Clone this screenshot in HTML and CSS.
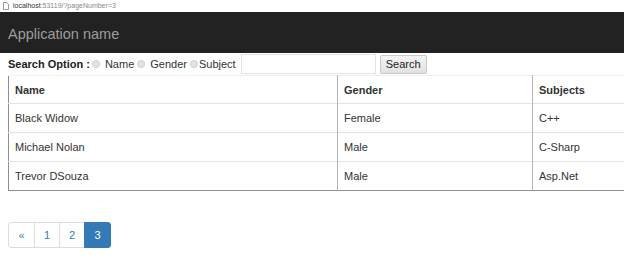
FILE: index.html
```html
<!DOCTYPE html>
<html>
<head>
<meta charset="utf-8">
<link rel="stylesheet" href="styles.css">
</head>
<body>
<div class="page">
  <div class="urlbar">
    <svg class="docicon" width="6" height="8" viewBox="0 0 6 8"><path d="M0.5 0.5H3.8L5.5 2.2V7.5H0.5Z" fill="#fff" stroke="#999" stroke-width="1"/></svg>
    <span class="host">localhost</span><span class="path">:53119/?pageNumber=3</span>
  </div>
  <div class="navbar"><span class="brand">Application name</span></div>
  <form class="search">
    <b class="label">Search Option :</b>
    <input type="radio" class="radio" name="opt"><span class="opt">Name</span>
    <input type="radio" class="radio" name="opt"><span class="opt">Gender</span>
    <input type="radio" class="radio tight" name="opt"><span class="opt">Subject</span>
    <input type="text" class="box">
    <button type="button" class="btn">Search</button>
  </form>
  <table class="grid">
    <thead>
      <tr><th class="c1">Name</th><th class="c2">Gender</th><th class="c3">Subjects</th></tr>
    </thead>
    <tbody>
      <tr><td>Black Widow</td><td>Female</td><td>C++</td></tr>
      <tr><td>Michael Nolan</td><td>Male</td><td>C-Sharp</td></tr>
      <tr><td>Trevor DSouza</td><td>Male</td><td>Asp.Net</td></tr>
    </tbody>
  </table>
  <ul class="pager">
    <li><a>&laquo;</a></li>
    <li><a>1</a></li>
    <li><a>2</a></li>
    <li class="active"><a>3</a></li>
  </ul>
</div>
</body>
</html>
```
FILE: styles.css
```css
html, body {
  margin: 0;
  padding: 0;
  background: #fff;
  overflow: hidden;
}
.page {
  width: 624px;
  height: 259px;
  overflow: hidden;
  font-family: "Liberation Sans", Arial, sans-serif;
  font-size: 11px;
  color: #333;
}
.urlbar {
  height: 12px;
  display: flex;
  align-items: center;
  padding-left: 3px;
  font-size: 7px;
  line-height: 12px;
  background: #fff;
}
.docicon {
  margin-right: 4px;
}
.host { color: #333; }
.path { color: #888; }
.navbar {
  height: 41px;
  background: #222;
  display: flex;
  align-items: center;
  padding-left: 8px;
}
.brand {
  color: #9d9d9d;
  font-size: 14.5px;
  padding-top: 2px;
}
.search {
  display: flex;
  align-items: center;
  height: 22px;
  margin: 0 0 0 8px;
  color: #333;
  font-size: 11px;
}
.label {
  font-weight: bold;
  color: #222;
}
.radio {
  appearance: none;
  -webkit-appearance: none;
  width: 8px;
  height: 8px;
  border-radius: 50%;
  background: #e2e2e2;
  border: 1px solid #cfcfcf;
  margin: 0 5px 0 2px;
  padding: 0;
  box-sizing: border-box;
}
.radio.tight { margin-right: 1px; }
.opt { margin-right: 1px; }
.box {
  width: 135px;
  height: 20px;
  box-sizing: border-box;
  border: 1px solid #e3e3e3;
  margin: 0 0 0 4px;
  padding: 0;
}
.btn {
  height: 19px;
  width: 47px;
  margin-left: 4px;
  padding: 0;
  font-family: "Liberation Sans", Arial, sans-serif;
  font-size: 11px;
  color: #222;
  background: linear-gradient(#f4f4f4, #e2e2e2);
  border: 1px solid #c8c8c8;
  border-radius: 2px;
}
.grid {
  margin-left: 8px;
  width: 660px;
  border-collapse: collapse;
  border-left: 1px solid #8f8f8f;
  border-bottom: 1px solid #8f8f8f;
}
.grid th, .grid td {
  text-align: left;
  padding: 0 0 0 6px;
  border-top: 1px solid #e4e4e4;
  border-right: 1px solid #b5b5b5;
  vertical-align: middle;
}
.grid th {
  height: 26px;
  font-weight: bold;
  color: #333;
  padding-top: 1px;
}
.grid td {
  height: 28px;
  color: #333;
}
.grid thead tr th { border-top: 1px solid #efefef; }
.c1 { width: 322px; }
.c2 { width: 188px; }
.pager {
  list-style: none;
  display: flex;
  margin: 31px 0 0 8px;
  padding: 0;
}
.pager li a {
  display: flex;
  align-items: center;
  justify-content: center;
  height: 24px;
  width: 24px;
  border: 1px solid #ddd;
  margin-left: -1px;
  color: #337ab7;
  font-size: 11px;
}
.pager li:first-child a {
  margin-left: 0;
  border-radius: 3px 0 0 3px;
  width: 25px;
}
.pager li.active a {
  background: #337ab7;
  border-color: #337ab7;
  color: #fff;
  border-radius: 0 3px 3px 0;
  width: 25px;
}
```
